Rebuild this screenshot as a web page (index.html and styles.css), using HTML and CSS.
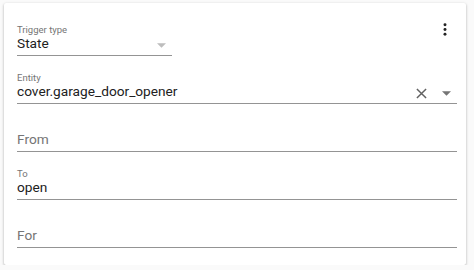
FILE: index.html
```html
<!DOCTYPE html>
<html lang="en">
<head>
    <meta charset="UTF-8">
    <title>Trigger</title>
    <link rel="stylesheet" href="styles.css">
</head>
<body>

    <div class="card">
        <div class="card-top">
            <!-- Trigger type -->
            <div class="field field-short">
                <div class="label">Trigger type</div>
                <div class="value-row">
                    <span class="value">State</span>
                    <svg class="arrow arrow-light" viewBox="0 0 10 5"><path d="M0 0 L10 0 L5 5 Z"/></svg>
                </div>
            </div>
            <svg class="menu" viewBox="0 0 4 14">
                <circle cx="2" cy="2" r="1.6"/>
                <circle cx="2" cy="7" r="1.6"/>
                <circle cx="2" cy="12" r="1.6"/>
            </svg>
        </div>

        <!-- Entity -->
        <div class="field">
            <div class="label">Entity</div>
            <div class="value-row">
                <span class="value">cover.garage_door_opener</span>
                <svg class="clear" viewBox="0 0 12 12"><path d="M1 1 L11 11 M11 1 L1 11"/></svg>
                <svg class="arrow" viewBox="0 0 10 5"><path d="M0 0 L10 0 L5 5 Z"/></svg>
            </div>
        </div>

        <div class="field">
            <div class="label"></div>
            <div class="value-row"><span class="placeholder">From</span></div>
        </div>

        <div class="field">
            <div class="label">To</div>
            <div class="value-row"><span class="value">open</span></div>
        </div>

        <div class="field">
            <div class="label"></div>
            <div class="value-row"><span class="placeholder">For</span></div>
        </div>
    </div>

</body>
</html>
```

FILE: styles.css
```css
body {
    margin: 0;
    padding: 0;
    background: #fafafa;
    font-family: 'Roboto', 'Liberation Sans', sans-serif;
}
.card {
    margin: 3px 0 0 4px;
    width: 440px;
    height: 244px;
    padding: 5px 9px 13px 13px;
    background: #fff;
    border-radius: 2px;
    box-shadow: 0 1px 3px rgba(0, 0, 0, 0.25), 0 1px 2px rgba(0, 0, 0, 0.1);
}
.card-top {
    display: flex;
    justify-content: space-between;
    align-items: flex-start;
}
.menu {
    width: 4px;
    height: 13px;
    margin: 15px 10px 0 0;
    fill: #222;
}
.field {
    height: 31px;
    padding-top: 16px;
    border-bottom: 1px solid #949494;
}
.field-short {
    width: 155px;
}
.label {
    height: 11px;
    line-height: 11px;
    font-size: 9.5px;
    color: #757575;
}
.value-row {
    display: flex;
    align-items: center;
    height: 20px;
}
.value,
.placeholder {
    flex: 1;
    align-self: flex-start;
    line-height: 17px;
    font-size: 13.7px;
    color: #212121;
}
.placeholder {
    color: #757575;
}
.arrow {
    width: 9px;
    height: 5px;
    margin-right: 6px;
    fill: #757575;
}
.arrow-light {
    margin-right: 6px;
    fill: #bdbdbd;
}
.clear {
    width: 11px;
    height: 11px;
    margin-right: 15px;
    stroke: #616161;
    stroke-width: 1.6;
}
```
